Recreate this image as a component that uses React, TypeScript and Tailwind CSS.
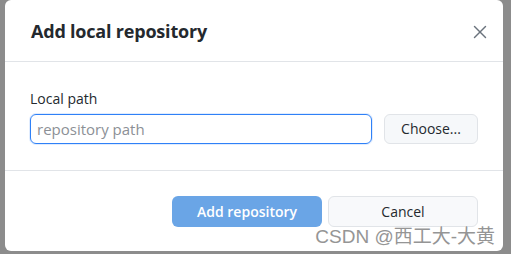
import { X } from 'lucide-react'

export default function App() {
  return (
    <div className="h-[254px] w-[511px] overflow-hidden bg-[#8c8c8c] pl-[5px] pr-[8px] pb-[3px] font-['Open_Sans',sans-serif]">
      <div className="relative flex h-full flex-col rounded-b-md rounded-t-md bg-white text-[#24292e]">
        <header className="flex h-[62px] items-center justify-between border-b border-[#e1e4e8] pl-[26px] pr-[12px] pt-[2px]">
          <h1 className="text-[18px] font-bold tracking-[-0.2px]">Add local repository</h1>
          <X className="h-[22px] w-[22px] text-[#6a737d]" strokeWidth={1.6} />
        </header>
        <div className="flex h-[109px] flex-col justify-center border-b border-[#e1e4e8] px-[25px] pt-[1px]">
          <label className="mb-[6px] text-[14px] leading-[18px]">Local path</label>
          <div className="flex items-center gap-[12px]">
            <input
              className="h-[30px] w-[342px] rounded-md border border-[#2f81f7] px-[6px] text-[15px] outline-none placeholder:text-[#8c9096] shadow-[0_0_0_1px_rgba(47,129,247,0.15)]"
              placeholder="repository path"
            />
            <button className="h-[30px] w-[94px] rounded-md border border-[#e1e4e8] bg-[#f6f8fa] text-[14px]">
              Choose...
            </button>
          </div>
        </div>
        <footer className="flex flex-1 items-start justify-end gap-[6px] pr-[25px] pt-[25px]">
          <button className="h-[31px] w-[150px] rounded-md bg-[#6aa5e6] text-[14px] font-semibold text-white">
            Add repository
          </button>
          <button className="h-[31px] w-[150px] rounded-md border border-[#e1e4e8] bg-[#f8f9fb] text-[14px]">
            Cancel
          </button>
        </footer>
        <span className="absolute bottom-[3px] right-[8px] font-['Liberation_Sans','Noto_Sans_CJK_SC',sans-serif] text-[19px] leading-[22px] text-[#959595] [text-shadow:0_0_1px_#fff,0_0_1px_#fff]">
          CSDN @西工大-大黄
        </span>
      </div>
    </div>
  )
}
